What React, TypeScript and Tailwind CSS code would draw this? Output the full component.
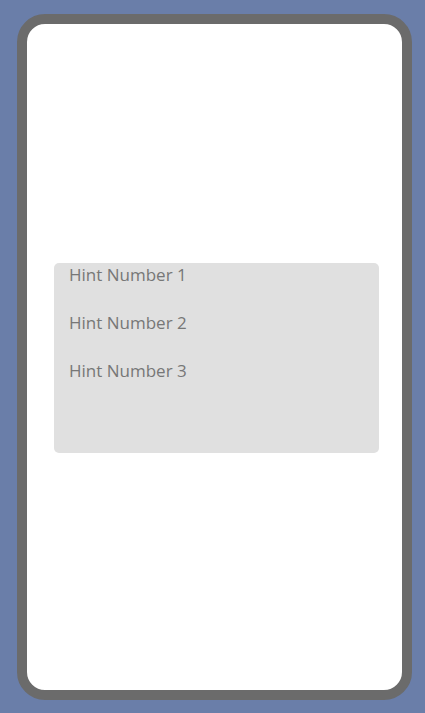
export default function App() {
  const hints = ['Hint Number 1', 'Hint Number 2', 'Hint Number 3'];

  return (
    <div className="min-h-[713px] w-full bg-[#6a7ea9] pt-[14px] pl-[17px]" style={{ fontFamily: '"Open Sans", "Noto Sans", sans-serif' }}>
      {/* Phone frame */}
      <div className="w-[395px] h-[686px] rounded-[28px] border-[10px] border-[#6b6b6b] bg-white flex items-center">
        <div className="ml-[27px] mt-[2px] w-[325px] h-[190px] rounded-[5px] bg-[#e0e0e0] px-[15px]">
          {hints.map((hint) => (
            <p key={hint} className="text-[17px] leading-[24px] mb-[24px] text-[#777777]">
              {hint}
            </p>
          ))}
        </div>
      </div>
    </div>
  );
}
